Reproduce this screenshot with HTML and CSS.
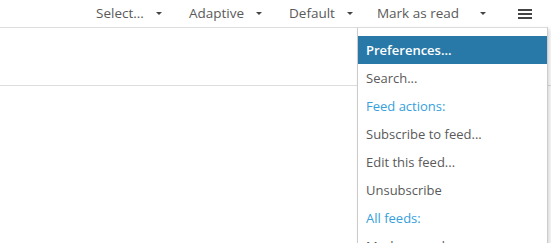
FILE: index.html
```html
<!DOCTYPE html>
<html>
<head>
<meta charset="utf-8">
<link rel="stylesheet" href="styles.css">
</head>
<body>
<div class="toolbar">
  <div class="dd">Select...<span class="caret"></span></div>
  <div class="dd">Adaptive<span class="caret"></span></div>
  <div class="dd dd-tight">Default<span class="caret"></span></div>
  <div class="dd dd-wide">Mark as read<span class="caret"></span></div>
  <div class="burger"><span></span><span></span><span></span></div>
</div>
<div class="headline-area"></div>
<div class="menu">
  <div class="item active">Preferences...</div>
  <div class="item">Search...</div>
  <div class="item heading">Feed actions:</div>
  <div class="item">Subscribe to feed...</div>
  <div class="item">Edit this feed...</div>
  <div class="item">Unsubscribe</div>
  <div class="item heading">All feeds:</div>
  <div class="item">Mark as read...</div>
</div>
</body>
</html>
```
FILE: styles.css
```css
html, body {
  margin: 0;
  padding: 0;
  height: 100%;
  overflow: hidden;
  background: #fff;
  font-family: "Open Sans", "Noto Sans", sans-serif;
  font-size: 13px;
  color: #5a5a5a;
}
.toolbar {
  height: 27px;
  border-bottom: 1px solid #ddd;
  display: flex;
  align-items: center;
  justify-content: flex-end;
  padding-right: 15px;
  margin-right: 4px;
  font-size: 13.5px;
}
.dd {
  display: flex;
  align-items: center;
  margin-right: 27px;
  line-height: 27px;
}
.dd-tight {
  margin-right: 24px;
}
.dd-wide {
  margin-right: 32px;
}
.dd-wide .caret {
  margin-left: 21px;
}
.caret {
  display: inline-block;
  width: 0;
  height: 0;
  margin-left: 12px;
  border-left: 3px solid transparent;
  border-right: 3px solid transparent;
  border-top: 3px solid #444;
}
.burger {
  display: flex;
  flex-direction: column;
  gap: 2px;
  width: 14px;
}
.burger span {
  display: block;
  height: 2px;
  background: #444;
}
.headline-area {
  height: 57px;
  border-bottom: 1px solid #ddd;
}
.menu {
  position: absolute;
  left: 357px;
  top: 27px;
  width: 189px;
  border: 1px solid #ccc;
  border-top: 1px solid #ddd;
  background: #fff;
  padding-top: 8px;
  box-shadow: 2px 2px 4px rgba(0, 0, 0, 0.15);
}
.item {
  height: 28px;
  line-height: 28px;
  padding-left: 8px;
  white-space: nowrap;
}
.item.active {
  background: #2879a8;
  color: #fff;
  font-weight: 600;
}
.item.heading {
  color: #35a0dc;
}
```
